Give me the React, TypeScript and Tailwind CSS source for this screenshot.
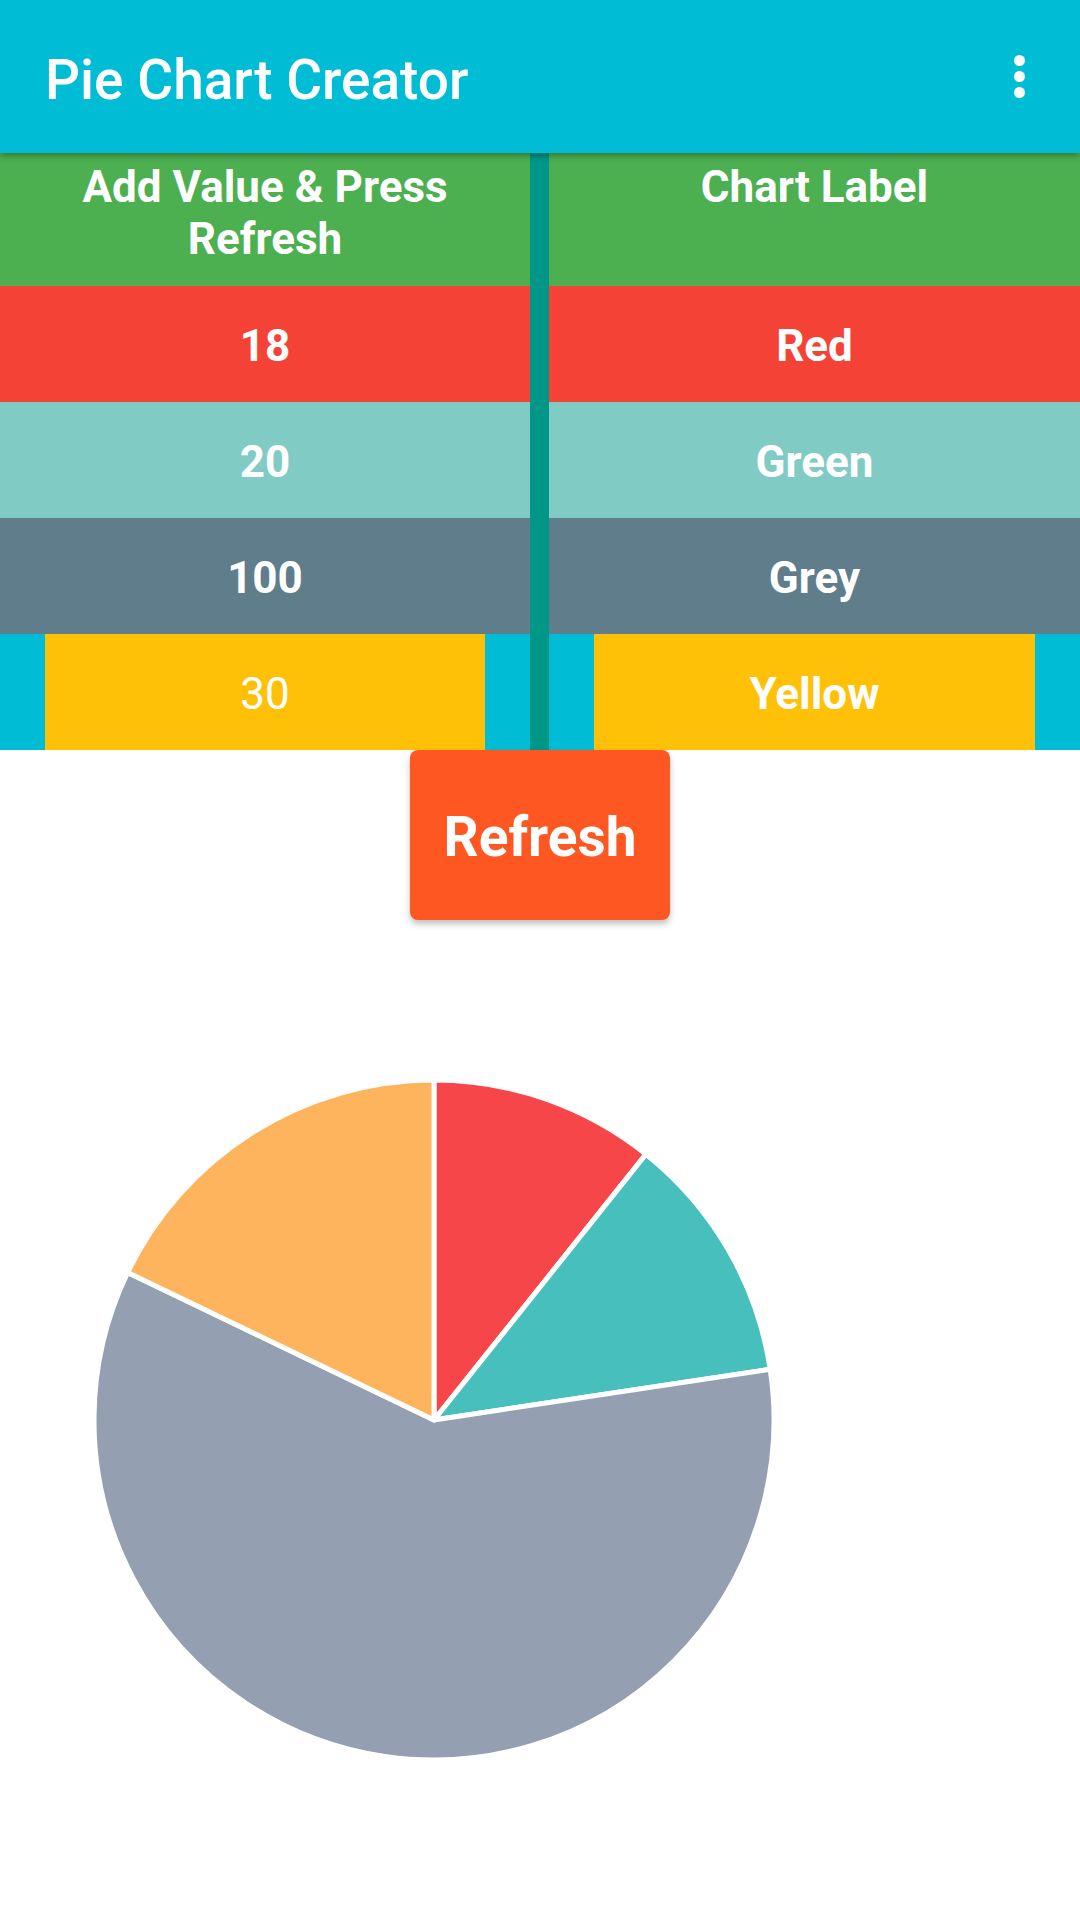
import React from "react";

const slices = [
  { value: 18, color: "#F7464A" },
  { value: 20, color: "#46BFBD" },
  { value: 100, color: "#949FB1" },
  { value: 30, color: "#FDB45C" },
];

function Pie() {
  const cx = 345;
  const cy = 345;
  const r = 340;
  const total = slices.reduce((s, x) => s + x.value, 0);
  let a0 = -Math.PI / 2;
  const paths = slices.map((s, i) => {
    const a1 = a0 + (s.value / total) * Math.PI * 2;
    const x0 = cx + r * Math.cos(a0);
    const y0 = cy + r * Math.sin(a0);
    const x1 = cx + r * Math.cos(a1);
    const y1 = cy + r * Math.sin(a1);
    const large = a1 - a0 > Math.PI ? 1 : 0;
    const d = `M ${cx} ${cy} L ${x0} ${y0} A ${r} ${r} 0 ${large} 1 ${x1} ${y1} Z`;
    a0 = a1;
    return <path key={i} d={d} fill={s.color} stroke="#ffffff" strokeWidth={5} strokeLinejoin="round" />;
  });
  return (
    <svg width={690} height={690} viewBox="0 0 690 690">
      {paths}
    </svg>
  );
}

const rows = [
  { v: "18", l: "Red", bg: "bg-[#F44336]", vBold: true, inset: false },
  { v: "20", l: "Green", bg: "bg-[#80CBC4]", vBold: true, inset: false },
  { v: "100", l: "Grey", bg: "bg-[#607D8B]", vBold: true, inset: false },
  { v: "30", l: "Yellow", bg: "bg-[#FFC107]", vBold: false, inset: true },
];

function Cell({ text, bg, bold, inset }: { text: string; bg: string; bold: boolean; inset: boolean }) {
  return (
    <div className={`h-[116px] ${inset ? "px-[45px]" : ""}`}>
      <div
        className={`h-full flex items-center justify-center pt-[3px] text-white text-[44px] leading-[52px] ${bg} ${
          bold ? "font-bold" : "font-normal"
        }`}
      >
        {text}
      </div>
    </div>
  );
}

export default function App() {
  return (
    <div
      className="w-[1080px] h-[1920px] bg-white overflow-hidden"
      style={{ fontFamily: "Roboto, 'Noto Sans', sans-serif" }}
    >
      <div className="relative z-10 h-[153px] bg-[#00BCD4] flex items-center pl-[45px] pr-[55px] shadow-[0_3px_6px_rgba(0,0,0,0.3)]">
        <div className="flex-1 pt-[7px] text-white text-[55px] font-medium">Pie Chart Creator</div>
        <div className="flex flex-col gap-[5px]">
          <div className="w-[11px] h-[11px] rounded-full bg-white" />
          <div className="w-[11px] h-[11px] rounded-full bg-white" />
          <div className="w-[11px] h-[11px] rounded-full bg-white" />
        </div>
      </div>

      <div className="flex bg-[#00BCD4]">
        <div className="w-[530px] flex flex-col">
          <div className="h-[133px] bg-[#4CAF50] px-[16px] pt-[8px] text-center text-white text-[44px] leading-[52px] font-bold">
            Add Value &amp; Press Refresh
          </div>
          {rows.map((r, i) => (
            <Cell key={i} text={r.v} bg={r.bg} bold={r.vBold} inset={r.inset} />
          ))}
        </div>
        <div className="w-[19px] bg-[#009688]" />
        <div className="flex-1 flex flex-col">
          <div className="h-[133px] bg-[#4CAF50] px-[16px] pt-[8px] text-center text-white text-[44px] leading-[52px] font-bold">
            Chart Label
          </div>
          {rows.map((r, i) => (
            <Cell key={i} text={r.l} bg={r.bg} bold={true} inset={r.inset} />
          ))}
        </div>
      </div>

      <div className="flex justify-center">
        <button className="w-[260px] h-[170px] pt-[4px] rounded-[8px] bg-[#FF5722] text-white text-[55px] font-bold shadow-[0_4px_6px_rgba(0,0,0,0.25)]">
          Refresh
        </button>
      </div>

      <div className="pl-[89px] pt-[155px]">
        <Pie />
      </div>
    </div>
  );
}
